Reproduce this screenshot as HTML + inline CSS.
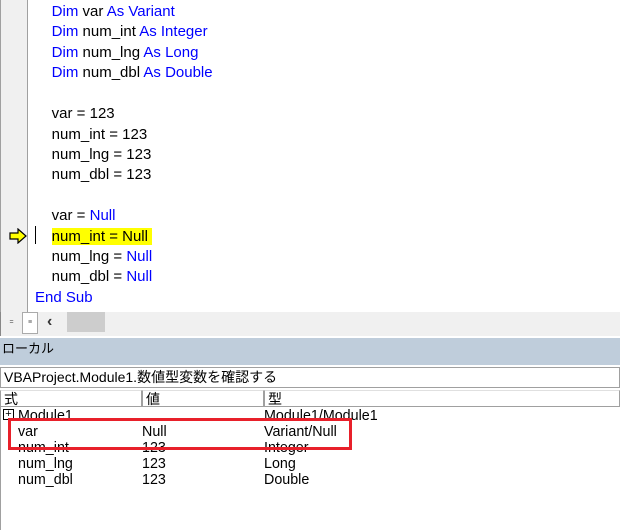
<!DOCTYPE html>
<html><head><meta charset="utf-8"><style>
*{margin:0;padding:0;box-sizing:border-box}
body{width:620px;height:530px;overflow:hidden;background:#fff;font-family:"Liberation Sans","Noto Sans CJK JP",sans-serif;position:relative}
.gut{position:absolute;left:0;top:0;width:28px;height:312px;background:#f0f0f0;border-left:1px solid #a0a0a0;border-right:1px solid #a0a0a0}
.code{position:absolute;left:35px;top:2px;font-size:15px;line-height:20.43px;color:#000}
.code div{height:20.43px;white-space:pre}
.k{color:#0000ff}
.hl{background:#ffff00;padding-right:4px}
.sb{position:absolute;left:0;top:312px;width:620px;height:24px;background:#f0f0f0}
.title{position:absolute;left:0;top:338px;width:620px;height:27px;background:#bfcddb;font-size:13px;line-height:22px;padding-left:2px}
.tb{position:absolute;left:0;top:367px;width:620px;height:21px;border:1px solid #a0a0a0;font-size:14px;line-height:19px;padding-left:3px;background:#fff}
.hdr{position:absolute;top:390px;height:17px;border:1px solid #a0a0a0;border-top-color:#e0e0e0;font-size:14px;line-height:16px;padding-left:3px;background:#fff}
.rows{position:absolute;left:0;top:408px;width:620px;font-size:14.3px;line-height:16px}
.r{position:relative;height:16px}
.r span{position:absolute;top:0}
</style></head><body>
<div class="gut"></div>
<svg style="position:absolute;left:9px;top:228px" width="18" height="16"><path d="M1 5h8V1l8 7-8 7v-4H1z" fill="#ffff00" stroke="#000" stroke-width="1.2"/></svg>
<div style="position:absolute;left:35px;top:226px;width:1px;height:18px;background:#000"></div>
<div class="code">
<div>    <span class="k">Dim</span> var <span class="k">As Variant</span></div>
<div>    <span class="k">Dim</span> num_int <span class="k">As Integer</span></div>
<div>    <span class="k">Dim</span> num_lng <span class="k">As Long</span></div>
<div>    <span class="k">Dim</span> num_dbl <span class="k">As Double</span></div>
<div> </div>
<div>    var = 123</div>
<div>    num_int = 123</div>
<div>    num_lng = 123</div>
<div>    num_dbl = 123</div>
<div> </div>
<div>    var = <span class="k">Null</span></div>
<div>    <span class="hl">num_int = Null</span></div>
<div>    num_lng = <span class="k">Null</span></div>
<div>    num_dbl = <span class="k">Null</span></div>
<div><span class="k">End Sub</span></div>
</div>
<div class="sb">
<div style="position:absolute;left:0;top:0;width:22px;height:24px;border-left:1px solid #888;font-size:7px;text-align:center;line-height:22px;color:#555">=</div>
<div style="position:absolute;left:22px;top:0;width:16px;height:22px;background:#fff;border:1px solid #aaa;font-size:7px;text-align:center;line-height:20px;color:#555">≡</div>
<div style="position:absolute;left:47px;top:1px;font-size:16px;font-weight:bold;color:#333">‹</div>
<div style="position:absolute;left:67px;top:0;width:38px;height:20px;background:#cdcdcd"></div>
</div>
<div class="title">ローカル</div>
<div class="tb">VBAProject.Module1.数値型変数を確認する</div>
<div class="hdr" style="left:0;width:142px">式</div>
<div class="hdr" style="left:142px;width:122px">値</div>
<div class="hdr" style="left:264px;width:356px">型</div>
<div class="rows">
<div class="r"><span style="left:3px;top:1px;width:11px;height:11px;border:1px solid #000;font-size:11px;line-height:8px;text-align:center">+</span><span style="left:18px">Module1</span><span style="left:264px">Module1/Module1</span></div>
<div class="r"><span style="left:18px">var</span><span style="left:142px">Null</span><span style="left:264px">Variant/Null</span></div>
<div class="r"><span style="left:18px">num_int</span><span style="left:142px">123</span><span style="left:264px">Integer</span></div>
<div class="r"><span style="left:18px">num_lng</span><span style="left:142px">123</span><span style="left:264px">Long</span></div>
<div class="r"><span style="left:18px">num_dbl</span><span style="left:142px">123</span><span style="left:264px">Double</span></div>
</div>
<div style="position:absolute;left:0;top:406px;width:1px;height:124px;background:#a0a0a0"></div>
<div style="position:absolute;left:8px;top:418px;width:344px;height:32px;border:3px solid #e8202a"></div>
</body></html>
